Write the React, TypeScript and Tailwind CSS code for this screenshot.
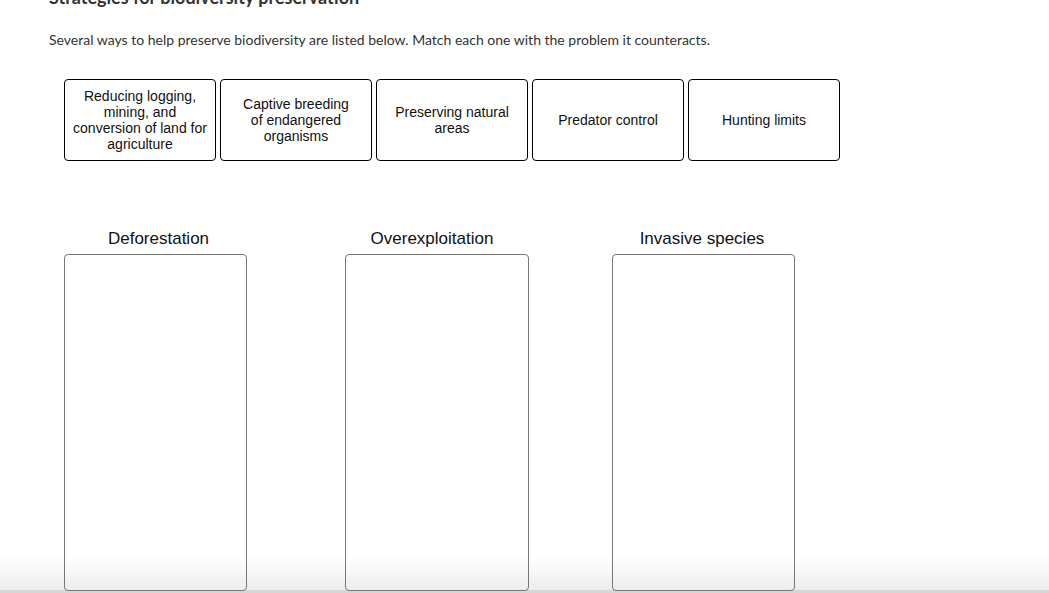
export default function App() {
	const strategies = [
		["Reducing logging,", "mining, and", "conversion of land for", "agriculture"],
		["Captive breeding", "of endangered", "organisms"],
		["Preserving natural", "areas"],
		["Predator control"],
		["Hunting limits"],
	];

	return (
		<div className="relative h-[593px] w-full overflow-hidden bg-[linear-gradient(to_bottom,#ffffff_0px,#ffffff_555px,#ededed_590px,#d6d6d6_590px,#d6d6d6_593px)] font-['Liberation_Sans',Arial,sans-serif]">
			{/* Title, cut off at top */}
			<h1 className="pl-[49px] -mt-[13px] h-[20px] text-[18px] leading-[20px] font-bold text-[#333] font-['Lato',sans-serif]">
				Strategies for biodiversity preservation
			</h1>

			<p className="pl-[49px] mt-[25px] text-[14px] leading-[16px] text-[#333] font-['Lato',sans-serif]">
				Several ways to help preserve biodiversity are listed below. Match each one with the problem it counteracts.
			</p>

			{/* Draggable strategy cards */}
			<div className="flex gap-[4px] pl-[64px] mt-[31px]">
				{strategies.map((lines) => (
					<div
						key={lines[0]}
						className="w-[152px] h-[82px] flex flex-col items-center justify-center rounded-[4px] border border-black bg-white text-center text-[14px] leading-[16px] text-[#111]"
					>
						{lines.map((l) => (
							<span key={l}>{l}</span>
						))}
					</div>
				))}
			</div>

			{/* Drop zones */}
			<div className="flex pl-[64px] mt-[68px]">
				<div className="w-[183px] flex flex-col">
					<div className="h-[25px] text-center text-[17px] leading-[20px] text-[#111] pl-[6px]">Deforestation</div>
					<div className="h-[337px] rounded-[4px] border border-[#777]" />
				</div>
				<div className="w-[184px] ml-[98px] flex flex-col">
					<div className="h-[25px] text-center text-[17px] leading-[20px] text-[#111] pr-[10px]">Overexploitation</div>
					<div className="h-[337px] rounded-[4px] border border-[#777]" />
				</div>
				<div className="w-[183px] ml-[83px] flex flex-col">
					<div className="h-[25px] text-center text-[17px] leading-[20px] text-[#111] pr-[3px]">Invasive species</div>
					<div className="h-[337px] rounded-[4px] border border-[#777]" />
				</div>
			</div>
		</div>
	);
}
